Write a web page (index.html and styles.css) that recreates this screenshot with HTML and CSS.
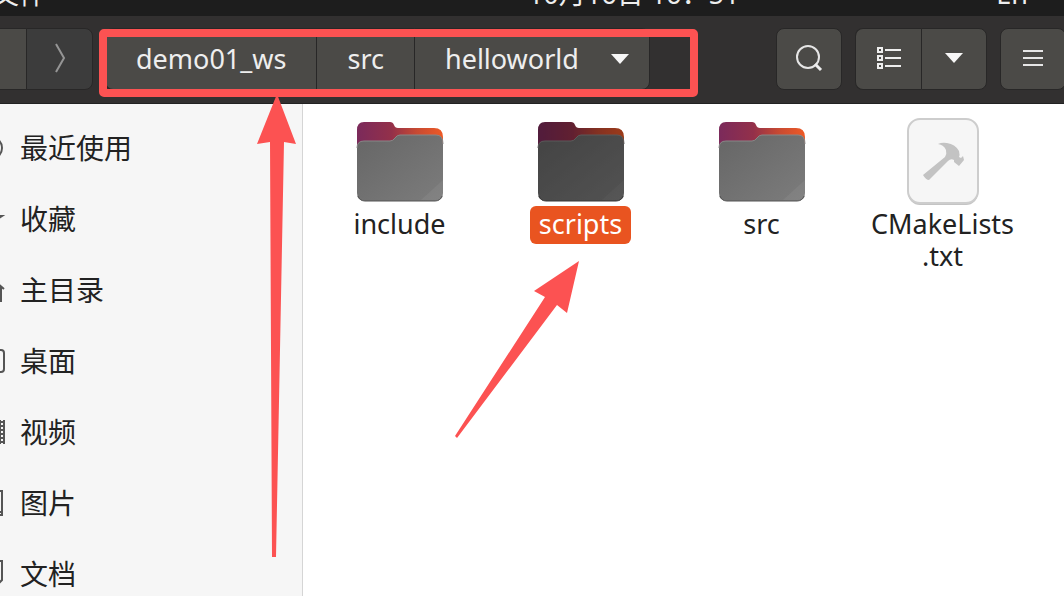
FILE: index.html
```html
<!DOCTYPE html>
<html lang="zh-CN">
<head>
<meta charset="utf-8">
<title>helloworld</title>
<link rel="stylesheet" href="styles.css">
</head>
<body>
<svg class="defs" aria-hidden="true">
  <defs>
    <linearGradient id="back" x1="0" y1="0" x2="1" y2="0">
      <stop offset="0" stop-color="#7b2a5b"/><stop offset=".4" stop-color="#93304a"/><stop offset=".7" stop-color="#c84a32"/><stop offset="1" stop-color="#ee5a26"/>
    </linearGradient>
    <linearGradient id="front" x1="0" y1="0" x2="1" y2="1">
      <stop offset="0" stop-color="#666"/><stop offset="1" stop-color="#7c7c7c"/>
    </linearGradient>
    <symbol id="folder" viewBox="0 0 88 80">
      <path fill="url(#back)" d="M8 0H34q3 0 4 3t4 3H78q9 0 9 9V34H1V8q0-8 7-8z"/>
      <path fill="url(#front)" d="M1 26q0-7 7-7H34q3 0 5-3t5-3H80q7 0 7 9V71q0 8-8 8H9q-8 0-8-8z"/>
      <path fill="none" stroke="#888" d="M1 26q0-7 7-7H34q3 0 5-3t5-3H80q7 0 7 9"/>
      <path fill="none" stroke="#555" d="M2 74q2 5 7 5H79q5 0 7-5"/>
      <path fill="#fff" opacity=".06" d="M65 78 87 58V71q0 7-8 7z"/>
    </symbol>
  </defs>
</svg>

<header class="topbar">
  <span class="app">文件</span>
  <time class="clock">10月16日 16：51</time>
  <span class="lang">En</span>
</header>

<div class="headerbar">
  <div class="history">
    <button class="btn back" aria-label="后退"></button>
    <button class="btn forward" aria-label="前进"><svg width="12" height="30" viewBox="0 0 12 30"><path d="M2 1 10 15 2 29" fill="none" stroke="#959595" stroke-width="2"/></svg></button>
  </div>
  <nav class="path">
    <button class="btn crumb">demo01_ws</button>
    <button class="btn crumb">src</button>
    <button class="btn crumb">helloworld<svg width="18" height="10" viewBox="0 0 18 10"><path d="M0 0H18L9 10z" fill="#f7f7f7"/></svg></button>
  </nav>
  <div class="tools">
    <button class="btn tool" aria-label="搜索"><svg width="28" height="28" viewBox="0 0 28 28"><circle cx="13" cy="13" r="11" fill="none" stroke="#e6e6e6" stroke-width="2"/><path d="M20 20 26 26" stroke="#eee" stroke-width="3"/></svg></button>
    <div class="view">
      <button class="btn tool" aria-label="列表视图"><svg width="24" height="22" viewBox="0 0 24 22"><g fill="none" stroke="#eee" stroke-width="2"><path d="M1 1h4v4H1zM1 9h4v4H1zM1 17h4v4H1z"/><path d="M8 3H24M8 11H24M8 19H24"/></g></svg></button>
      <button class="btn tool" aria-label="视图选项"><svg width="18" height="10" viewBox="0 0 18 10"><path d="M0 0H18L9 10z" fill="#f7f7f7"/></svg></button>
    </div>
    <button class="btn tool" aria-label="菜单"><svg width="20" height="20" viewBox="0 0 20 20"><path d="M0 3H20M0 10H20M0 17H20" stroke="#e6e6e6" stroke-width="2"/></svg></button>
  </div>
</div>

<div class="body">
  <aside class="sidebar">
    <a href="#"><svg viewBox="0 0 8 28"><circle cx="-9" cy="14" r="11" /></svg>最近使用</a>
    <a href="#"><svg viewBox="0 0 8 28"><path d="M-14 11H2L-4 15" /></svg>收藏</a>
    <a href="#"><svg viewBox="0 0 8 28"><path d="M-8 3 4 13M1 11V25H-4V14" /></svg>主目录</a>
    <a href="#"><svg viewBox="0 0 8 28"><rect x="-20" y="3" width="24" height="22" rx="3"/></svg>桌面</a>
    <a href="#"><svg viewBox="0 0 8 28"><path d="M0 2V26M4 2V26M0 4H4M0 8H4M0 12H4M0 16H4M0 20H4M0 24H4" /></svg>视频</a>
    <a href="#"><svg viewBox="0 0 8 28"><path d="M-20 2H2V26H-20M-2 23H2" /></svg>图片</a>
    <a href="#"><svg viewBox="0 0 8 28"><path d="M-16 1H2V20L-3 25H-16" /></svg>文档</a>
  </aside>
  <main class="files">
    <a class="file" href="#"><svg class="icon"><use href="#folder"/></svg><span>include</span></a>
    <a class="file selected" href="#"><svg class="icon"><use href="#folder"/></svg><span>scripts</span></a>
    <a class="file" href="#"><svg class="icon"><use href="#folder"/></svg><span>src</span></a>
    <a class="file" href="#"><svg class="icon doc" viewBox="0 0 72 88">
      <rect x="1" y="2" width="70" height="85" rx="12" fill="#c4c4c4"/>
      <rect x="1" y="1" width="70" height="84" rx="12" fill="#f6f6f6" stroke="#cdcdcd" stroke-width="2"/>
      <path fill="#c3c3c3" d="M31 26q4-2 9-1 8 1 12 8 1 4 0 6l2 1 2-2 1 4-5 6-5-4v-2q-3-2-6 1L22 62q-3 0-6-5L38 39q2-3 1-7-2-5-8-6z"/>
    </svg><span>CMakeLists<br>.txt</span></a>
  </main>
</div>

<svg class="marks" width="700" height="596" aria-hidden="true">
  <rect x="103" y="33" width="591" height="60" rx="1" fill="none" stroke="#fc5252" stroke-width="8"/>
  <path fill="#fc5252" d="M277 94 296 144 284 142 276 557H272L270 142 257 144zM579 261 567 313 557 305 457 438 455 436 545 297 534 291z"/>
</svg>
</body>
</html>
```

FILE: styles.css
```css
* { box-sizing: border-box; }
body {
  margin: 0;
  min-height: 100vh;
  display: flex;
  flex-direction: column;
  overflow: hidden;
  background: #fff;
  font: 27px/32px "Noto Sans", "Noto Sans CJK SC", sans-serif;
  color: #222;
}
a { color: inherit; text-decoration: none; }
.defs { position: absolute; width: 0; height: 0; }
.topbar {
  height: 16px;
  padding: 0 36px 6px 0;
  display: flex;
  justify-content: space-between;
  align-items: flex-end;
  overflow: hidden;
  background: #1d1d1d;
  color: #eee;
}
/* the outer labels share the free width so the clock sits right of centre */
.app { flex: 13; margin-left: -8px; }
.lang { flex: 7; text-align: right; }
.clock { flex: none; }
.headerbar {
  height: 88px;
  display: flex;
  align-items: flex-start;
  padding-top: 12px;
  background: #323030;
  border-bottom: 1px solid #222;
}
.btn {
  height: 62px;
  border: 1px solid #282727;
  border-radius: 8px;
  background: #4b4a47;
  color: #eee;
  font: inherit;
  padding: 0 0 2px;
  display: flex;
  align-items: center;
  justify-content: center;
}
.history, .path, .view, .tools { display: flex; }
.back { width: 26px; border-left: 0; border-right: 0; border-radius: 0; }
.forward { width: 67px; border-radius: 0 8px 8px 0; background: #3c3c3c; }
.path { margin-left: 12px; }
.crumb { padding: 0 30px; gap: 32px; }
.crumb:last-child { padding-right: 20px; }
.path .btn:not(:last-child), .view .btn:first-child { border-right: 0; border-top-right-radius: 0; border-bottom-right-radius: 0; }
.path .btn:not(:first-child), .view .btn:last-child { border-top-left-radius: 0; border-bottom-left-radius: 0; }
.tools { margin: 0 -2px 0 auto; gap: 13px; }
.tool { width: 66px; }
.body { flex: 1; display: flex; }
.sidebar {
  width: 303px;
  padding-top: 8px;
  background: #f6f6f6;
  border-right: 1px solid #d5d5d5;
  font-size: 28px;
}
.sidebar a { display: flex; align-items: center; gap: 12px; height: 71px; }
.sidebar svg { width: 8px; height: 28px; fill: none; stroke: #555; stroke-width: 2; }
.files { display: flex; align-items: flex-start; padding: 14px 0 0 6px; }
.file { width: 181px; display: flex; flex-direction: column; align-items: center; text-align: center; }
.icon { width: 88px; height: 80px; margin: 4px 0; }
.doc { width: 72px; height: 88px; margin: 0; }
.file span { padding: 2px 9px 4px; border-radius: 6px; }
.selected span { background: #e95420; color: #fff; }
.selected .icon { filter: brightness(.66); }
.marks { position: absolute; left: 0; top: 0; pointer-events: none; }
```
